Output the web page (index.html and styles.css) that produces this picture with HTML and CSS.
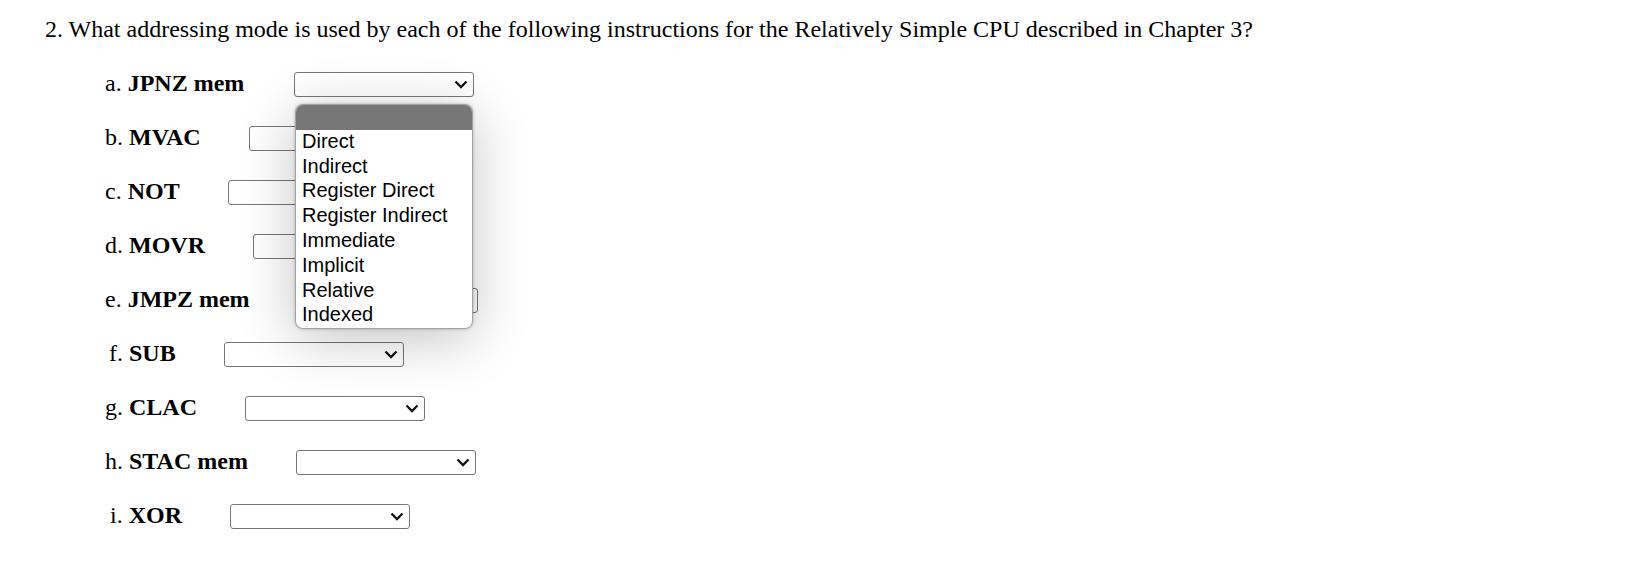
FILE: index.html
```html
<!DOCTYPE html>
<html lang="en">
<head>
<meta charset="utf-8">
<title>Addressing modes</title>
<link rel="stylesheet" href="styles.css">
</head>
<body>
<main class="page">
  <p class="question">2. What addressing mode is used by each of the following instructions for the Relatively Simple CPU described in Chapter 3?</p>
  <div class="items">
    <div class="row">
      <span class="label">a. <b>JPNZ mem</b></span>
      <span class="sel sel-wide-gap"><select aria-label="a"><option></option></select><svg class="chev" viewBox="0 0 14 9" width="14" height="9"><path d="M1.5 1.5 L7 7 L12.5 1.5" /></svg></span>
    </div>
    <div class="row">
      <span class="label">b. <b>MVAC</b></span>
      <span class="sel"><select aria-label="b"><option></option></select><svg class="chev" viewBox="0 0 14 9" width="14" height="9"><path d="M1.5 1.5 L7 7 L12.5 1.5" /></svg></span>
    </div>
    <div class="row">
      <span class="label">c. <b>NOT</b></span>
      <span class="sel"><select aria-label="c"><option></option></select><svg class="chev" viewBox="0 0 14 9" width="14" height="9"><path d="M1.5 1.5 L7 7 L12.5 1.5" /></svg></span>
    </div>
    <div class="row">
      <span class="label">d. <b>MOVR</b></span>
      <span class="sel"><select aria-label="d"><option></option></select><svg class="chev" viewBox="0 0 14 9" width="14" height="9"><path d="M1.5 1.5 L7 7 L12.5 1.5" /></svg></span>
    </div>
    <div class="row">
      <span class="label">e. <b>JMPZ mem</b></span>
      <span class="sel"><select aria-label="e"><option></option></select><svg class="chev" viewBox="0 0 14 9" width="14" height="9"><path d="M1.5 1.5 L7 7 L12.5 1.5" /></svg></span>
    </div>
    <div class="row row-shift-4">
      <span class="label">f. <b>SUB</b></span>
      <span class="sel"><select aria-label="f"><option></option></select><svg class="chev" viewBox="0 0 14 9" width="14" height="9"><path d="M1.5 1.5 L7 7 L12.5 1.5" /></svg></span>
    </div>
    <div class="row">
      <span class="label">g. <b>CLAC</b></span>
      <span class="sel"><select aria-label="g"><option></option></select><svg class="chev" viewBox="0 0 14 9" width="14" height="9"><path d="M1.5 1.5 L7 7 L12.5 1.5" /></svg></span>
    </div>
    <div class="row">
      <span class="label">h. <b>STAC mem</b></span>
      <span class="sel"><select aria-label="h"><option></option></select><svg class="chev" viewBox="0 0 14 9" width="14" height="9"><path d="M1.5 1.5 L7 7 L12.5 1.5" /></svg></span>
    </div>
    <div class="row row-shift-5">
      <span class="label">i. <b>XOR</b></span>
      <span class="sel"><select aria-label="i"><option></option></select><svg class="chev" viewBox="0 0 14 9" width="14" height="9"><path d="M1.5 1.5 L7 7 L12.5 1.5" /></svg></span>
    </div>
  </div>
</main>
<ul class="popup" role="listbox">
  <li class="opt opt-active"></li>
  <li class="opt">Direct</li>
  <li class="opt">Indirect</li>
  <li class="opt">Register Direct</li>
  <li class="opt">Register Indirect</li>
  <li class="opt">Immediate</li>
  <li class="opt">Implicit</li>
  <li class="opt">Relative</li>
  <li class="opt">Indexed</li>
</ul>
</body>
</html>
```
FILE: styles.css
```css
html, body {
  margin: 0;
  padding: 0;
  background: #ffffff;
}

body {
  position: relative;
  width: 1640px;
  height: 562px;
  overflow: hidden;
  font-family: "Liberation Serif", "Times New Roman", serif;
  color: #000;
}

.page {
  padding: 15px 0 0 45px;
}

.question {
  margin: 0;
  font-size: 24px;
  line-height: 28px;
  white-space: nowrap;
}

.items {
  padding-top: 14.5px;
  padding-left: 60px;
}

.row {
  display: flex;
  align-items: center;
  height: 54px;
}

.row-shift-4 { padding-left: 4px; }
.row-shift-5 { padding-left: 5px; }

.label {
  font-size: 24px;
  line-height: 25px;
  padding-bottom: 3px;
  white-space: nowrap;
}

.label b {
  font-weight: bold;
}

.sel {
  position: relative;
  display: block;
  width: 180px;
  height: 25px;
  margin-left: 48px;
}

.sel-wide-gap {
  margin-left: 50px;
}

.sel select {
  -webkit-appearance: none;
  appearance: none;
  display: block;
  box-sizing: border-box;
  width: 180px;
  height: 25px;
  margin: 0;
  padding: 0 4px;
  border: 1px solid #767676;
  border-radius: 3px;
  background: #fff;
  font-family: "Liberation Sans", Arial, sans-serif;
  font-size: 20px;
  outline: none;
}

.chev {
  position: absolute;
  right: 6px;
  top: 8px;
  pointer-events: none;
}

.chev path {
  fill: none;
  stroke: #111;
  stroke-width: 2.3;
  stroke-linecap: butt;
  stroke-linejoin: miter;
}

.popup {
  position: absolute;
  left: 295px;
  top: 104px;
  width: 178px;
  box-sizing: border-box;
  margin: 0;
  padding: 0;
  list-style: none;
  background: #fff;
  border: 1px solid #a3a3a3;
  border-radius: 8px;
  overflow: hidden;
  box-shadow: 0 10px 55px rgba(0, 0, 0, 0.24), 0 0 3px rgba(0, 0, 0, 0.28);
  font-family: "Liberation Sans", Arial, sans-serif;
  font-size: 20px;
  color: #000;
}

.opt {
  height: 24.8px;
  line-height: 22.2px;
  padding: 0 0 0 6px;
  white-space: nowrap;
}

.opt-active {
  background: #777777;
}
```
